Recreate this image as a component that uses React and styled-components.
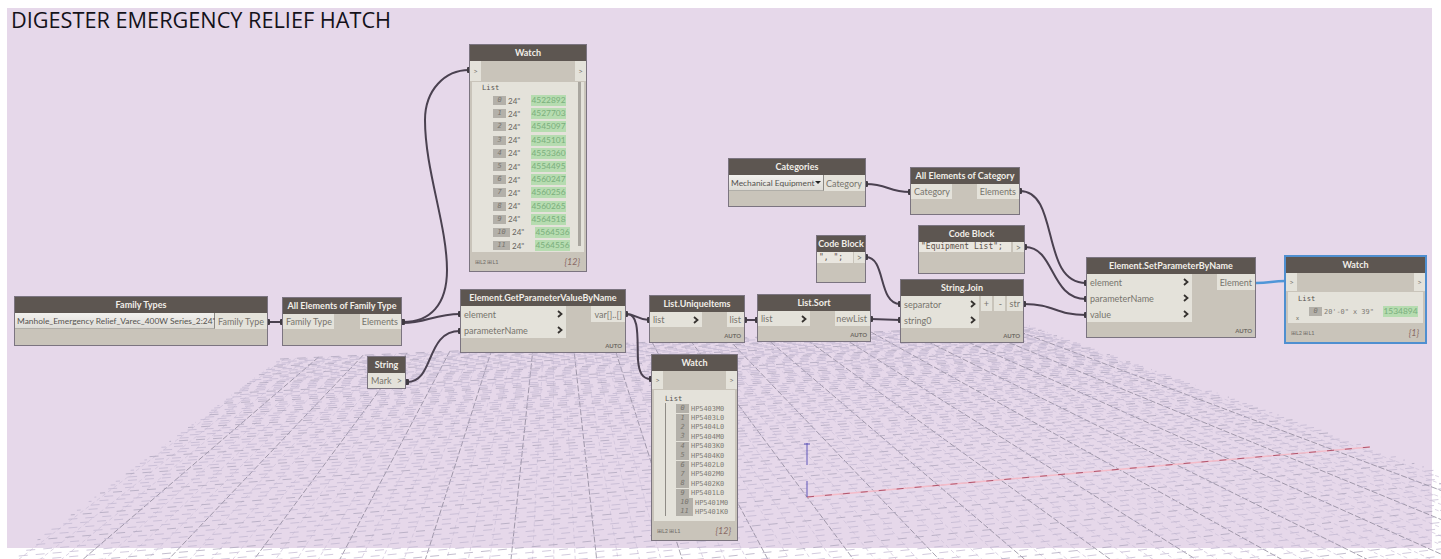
import React from 'react';
import styled, {createGlobalStyle} from 'styled-components';

// ********** Perspective grid ********** //

const cross = (p1, p2, q1, q2) => {
  const a = p2[0] - p1[0], b = p2[1] - p1[1], c = q2[0] - q1[0], d = q2[1] - q1[1];
  const t = ((q1[0] - p1[0]) * d - (q1[1] - p1[1]) * c) / (a * d - b * c);
  return [p1[0] + a * t, p1[1] + b * t];
};

const LEFT_VP = [553, 156];
const RIGHT_VP = [4593, 163];
const CORNER_A = [280, 359];
const CORNER_B = [1027, 325];

const toPath = (p, q) => `M${p[0].toFixed(1)} ${p[1].toFixed(1)}L${q[0].toFixed(1)} ${q[1].toFixed(1)}`;

// the dashes must not line up from one row to the next
const scatter = k => {
  const s = Math.sin(k * 12.9898 + 4.1) * 43758.5453;
  return (s - Math.floor(s)) * 17;
};

const steepLines = [];
for (let k = -40; k <= 40; k++) {
  const x = 845 + k * 20.8;
  if (x < 26 || x > 1652) continue;
  const start = cross(LEFT_VP, [x, 548], CORNER_A, CORNER_B);
  const end = cross(LEFT_VP, [x, 548], [0, 640], [1, 640]);
  steepLines.push({d: toPath(start, end), major: k % 4 === 0, k});
}

const flatLines = [];
for (let k = -30; k <= 70; k++) {
  const y = 160 + 1 / (0.00245 + k * 0.0000368);
  const onLeft = [CORNER_A[0] - (y - CORNER_A[1]) / 0.745, y];
  const end = cross(RIGHT_VP, onLeft, CORNER_B, [1433, 470]);
  flatLines.push({d: toPath(onLeft, end), major: k % 5 === 0, k});
}

const GridPlane = () => (
  <Overlay viewBox="0 0 1441 559">
    {steepLines.map(l => (
      <path key={l.k} d={l.d} fill="none"
        stroke={l.major ? '#7f7a8c' : '#cdc2d9'}
        strokeWidth={0.7}
        strokeDasharray={l.major ? '6 2' : '4 3'} />
    ))}
    {flatLines.map(l => (
      <path key={l.k} d={l.d} fill="none"
        stroke={l.major ? '#a8a1b7' : '#bfb5ce'}
        strokeWidth={0.7}
        strokeDasharray="9 8"
        strokeDashoffset={scatter(l.k)} />
    ))}
    <path d="M807 497L1370 447" fill="none" stroke="#f5bcc9" strokeWidth="1.4" />
    <path d="M807 497L1370 447" fill="none" stroke="#b0566f" strokeWidth="1" strokeDasharray="7 11" />
    <path d="M807 443V465M804 444H810M807 481V497" fill="none" stroke="#5f55b8" strokeWidth="1" />
  </Overlay>
);

// ********** Wires ********** //

const WIRES = [
  'M268 322H282',
  'M403 322C430 322 447 305 447 270C447 225 425 170 425 120C425 90 445 70 469 70',
  'M403 323C425 323 435 314 460 314',
  'M407 382C435 382 425 331 460 331',
  'M626 314C636 314 638 320 649 320',
  'M627 314C640 314 637 340 638 360C639 372 642 379 651 379',
  'M745 320H757',
  'M871 319L900 320',
  'M866 184C888 184 888 192 910 192',
  'M866 257C886 257 878 304 900 304',
  'M1020 191C1060 191 1040 283 1086 283',
  'M1025 247C1055 247 1050 299 1086 299',
  'M1024 304C1055 304 1055 315 1086 315',
];

const NUBS = [
  [268, 322], [282, 322], [403, 322], [469, 70], [460, 314], [407, 382], [460, 331],
  [626, 314], [649, 320], [651, 379], [745, 320], [757, 320], [871, 319], [900, 320],
  [866, 184], [910, 192], [866, 257], [900, 304], [1020, 191], [1086, 283],
  [1025, 247], [1086, 299], [1024, 304], [1086, 315],
];

const WireLayer = () => (
  <Overlay viewBox="0 0 1441 559">
    {WIRES.map(d => <path key={d} d={d} fill="none" stroke="#4a4150" strokeWidth="2" />)}
    {NUBS.map(([x, y]) => <rect key={`${x}-${y}`} x={x - 2} y={y - 3} width="4" height="6" rx="1" fill="#3f3a42" />)}
    <path d="M1256 283C1270 283 1272 281 1285 281" fill="none" stroke="#4f96d8" strokeWidth="2.5" />
  </Overlay>
);

// ********** Page ********** //

const GlobalStyle = createGlobalStyle`
  html, body {
    margin: 0;
    background: #ffffff;
  }
`;

const Page = styled.div`
  position: relative;
  width: 1441px;
  height: 559px;
  overflow: hidden;
  background: #ffffff;
  font-family: Lato, "Open Sans", "Liberation Sans", sans-serif;
`;

const Canvas = styled.div`
  margin: 0 9px 0 7px;
  position: relative;
  top: 8px;
  height: 540px;
  padding: 0 4px;
  background: #e6d8ea;
`;

const Title = styled.h1`
  margin: 0;
  font-family: "Open Sans", "Liberation Sans", sans-serif;
  font-size: 21.7px;
  line-height: 24px;
  font-weight: 400;
  color: #14121a;
`;

const Overlay = styled.svg`
  position: absolute;
  left: 0;
  top: 0;
  width: 1441px;
  height: 559px;
`;

// ********** Node parts ********** //

const Node = styled.div`
  position: absolute;
  left: ${p => p.$x}px;
  top: ${p => p.$y}px;
  width: ${p => p.$w}px;
  height: ${p => p.$h}px;
  box-sizing: border-box;
  display: flex;
  flex-direction: column;
  background: #c9c4ba;
  border: ${p => (p.$selected ? '2px solid #4f8fd0' : '1px solid #7b7480')};
`;

const Header = styled.div`
  flex: none;
  height: 16px;
  background: #5d5651;
  color: #f1eee8;
  font-size: 9px;
  font-weight: 700;
  line-height: 16px;
  text-align: center;
  white-space: nowrap;
`;

const Body = styled.div`
  flex: 1;
  display: flex;
  justify-content: space-between;
  align-items: flex-start;
  min-height: 0;
`;

const Column = styled.div`
  width: ${p => p.$w}px;
  display: flex;
  flex-direction: column;
`;

const Port = styled.div`
  width: ${p => (p.$w ? `${p.$w}px` : 'auto')};
  height: ${p => p.$h || 16}px;
  box-sizing: border-box;
  padding: 0 3px;
  display: flex;
  align-items: center;
  justify-content: ${p => (p.$out ? 'flex-end' : 'space-between')};
  gap: 3px;
  background: #e4e2da;
  color: #77746d;
  font-size: 9px;
  white-space: nowrap;
`;

const Sep = styled.div`
  display: flex;
  gap: 2px;
`;

const Dropdown = styled.div`
  width: ${p => p.$w}px;
  height: 16px;
  box-sizing: border-box;
  padding: 0 3px 0 2px;
  display: flex;
  align-items: center;
  justify-content: space-between;
  background: linear-gradient(#f2f1ee, #dddbd6);
  border-right: 1px solid #8c8984;
  border-bottom: 1px solid #b0aea8;
  color: #55524f;
  font-size: 8.4px;
  white-space: nowrap;
`;

const Caret = styled.span`
  flex: none;
  width: 0;
  height: 0;
  border-left: 3px solid transparent;
  border-right: 3px solid transparent;
  border-top: 3px solid #222222;
`;

const CodeText = styled.div`
  width: ${p => p.$w}px;
  height: ${p => p.$h}px;
  box-sizing: border-box;
  padding-left: 2px;
  background: #e9e6df;
  color: #5b5048;
  font-family: "DejaVu Sans Mono", "Liberation Mono", monospace;
  font-size: 8px;
  line-height: ${p => p.$h}px;
  white-space: pre;
`;

const Auto = styled.div`
  flex: none;
  height: 10px;
  padding-right: 3px;
  color: #6f6b66;
  font-size: 6px;
  font-weight: 700;
  line-height: 8px;
  text-align: right;
`;

const ChevronMark = styled.svg`
  flex: none;
  width: 6px;
  height: 8px;
`;

const Chevron = () => (
  <ChevronMark viewBox="0 0 6 8">
    <path d="M1 1L4.5 4L1 7" fill="none" stroke="#35322f" strokeWidth="1.8" />
  </ChevronMark>
);

const InputPort = ({label, h}) => (
  <Port $h={h}>
    <span>{label}</span>
    <Chevron />
  </Port>
);

// ********** Watch parts ********** //

const PortBar = styled.div`
  flex: none;
  height: ${p => p.$h}px;
  display: flex;
  justify-content: space-between;
`;

const PortCell = styled.div`
  width: 11px;
  background: #e4e2da;
  color: #77746d;
  font-size: 8px;
  line-height: ${p => p.$h}px;
  text-align: center;
`;

const Panel = styled.div`
  flex: 1;
  position: relative;
  margin: 1px 2px 0;
  padding: ${p => p.$pad};
  min-height: 0;
  overflow: hidden;
  background: #e4e2da;
`;

const ListLabel = styled.div`
  height: ${p => p.$h}px;
  color: #55524f;
  font-family: "DejaVu Sans Mono", "Liberation Mono", monospace;
  font-size: 7.2px;
  line-height: ${p => p.$h}px;
`;

const Item = styled.div`
  height: ${p => p.$h}px;
  padding-left: ${p => p.$indent}px;
  display: flex;
  align-items: center;
`;

const Badge = styled.span`
  flex: none;
  width: ${p => p.$w}px;
  height: 9px;
  margin-right: 2px;
  background: #b3b0a9;
  color: #77746d;
  font-family: "DejaVu Sans Mono", "Liberation Mono", monospace;
  font-size: 7px;
  font-style: italic;
  line-height: 9px;
  text-align: center;
`;

const Value = styled.span`
  flex: none;
  width: ${p => p.$w}px;
  color: #66635d;
  font-size: 8px;
  white-space: nowrap;
`;

const MonoValue = styled.span`
  flex: none;
  width: ${p => (p.$w ? `${p.$w}px` : 'auto')};
  color: #7d7a73;
  font-family: "DejaVu Sans Mono", "Liberation Mono", monospace;
  font-size: 6.9px;
  white-space: pre;
`;

const Green = styled.span`
  flex: none;
  width: 35px;
  height: 11px;
  background: #b6dcb0;
  color: #7aae7c;
  font-size: 8.4px;
  line-height: 11px;
  text-align: center;
`;

const Scrollbar = styled.div`
  position: absolute;
  right: 3px;
  top: 0;
  bottom: 6px;
  width: 3px;
  background: #a9a69f;
`;

const TreeLine = styled.div`
  position: absolute;
  left: 11px;
  top: 13px;
  bottom: 5px;
  width: 1px;
  background: #8f8c86;
`;

const LevelMark = styled.span`
  position: absolute;
  left: 8px;
  bottom: 2px;
  color: #77746d;
  font-size: 6px;
`;

const Foot = styled.div`
  flex: none;
  height: ${p => p.$h}px;
  padding: 0 6px 0 5px;
  display: flex;
  align-items: center;
  justify-content: space-between;
  color: #6f6b66;
  font-size: 5.5px;
`;

const Count = styled.span`
  color: #8a6a66;
  font-size: 9px;
  font-style: italic;
`;

const Watch = ({x, y, w, h, selected, bar, pad, count, children}) => (
  <Node $x={x} $y={y} $w={w} $h={h} $selected={selected}>
    <Header>Watch</Header>
    <PortBar $h={bar}>
      <PortCell $h={bar}>&gt;</PortCell>
      <PortCell $h={bar}>&gt;</PortCell>
    </PortBar>
    <Panel $pad={pad}>{children}</Panel>
    <Foot $h={19}>
      <span>⊞L2 ⊞L1</span>
      <Count>{`{${count}}`}</Count>
    </Foot>
  </Node>
);

// ********** Data ********** //

const ELEMENT_IDS = [
  '4522892', '4527703', '4545097', '4545101', '4553360', '4554495',
  '4560247', '4560256', '4560265', '4564518', '4564536', '4564556',
];

const MARKS = [
  'HP5403M0', 'HP5403L0', 'HP5404L0', 'HP5404M0', 'HP5403K0', 'HP5404K0',
  'HP5402L0', 'HP5402M0', 'HP5402K0', 'HP5401L0', 'HP5401M0', 'HP5401K0',
];

// ********** App Component ********** //

const App = () => (
  <Page>
    <GlobalStyle />
    <Canvas>
      <Title>DIGESTER EMERGENCY RELIEF HATCH</Title>
    </Canvas>
    <GridPlane />
    <WireLayer />

    <Node $x={14} $y={296} $w={254} $h={50}>
      <Header>Family Types</Header>
      <Body>
        <Dropdown $w={200}>
          <span>Manhole_Emergency Relief_Varec_400W Series_2:24"</span>
          <Caret />
        </Dropdown>
        <Port $w={52} $out>Family Type</Port>
      </Body>
    </Node>

    <Node $x={282} $y={297} $w={120} $h={49}>
      <Header>All Elements of Family Type</Header>
      <Body>
        <Port $w={51} $h={15}>Family Type</Port>
        <Port $w={41} $h={15} $out>Elements</Port>
      </Body>
    </Node>

    <Node $x={367} $y={356} $w={39} $h={33}>
      <Header>String</Header>
      <Port $h={15}>
        <span>Mark</span>
        <span>&gt;</span>
      </Port>
    </Node>

    <Watch x={469} y={44} w={118} h={228} bar={20} pad="0 0 0 10px" count={12}>
      <ListLabel $h={12}>List</ListLabel>
      <Scrollbar />
      {ELEMENT_IDS.map((id, i) => (
        <Item key={id} $h={13.2} $indent={11}>
          <Badge $w={i > 9 ? 17 : 13}>{i}</Badge>
          <Value $w={23}>24"</Value>
          <Green>{id}</Green>
        </Item>
      ))}
    </Watch>

    <Node $x={460} $y={289} $w={166} $h={64}>
      <Header>Element.GetParameterValueByName</Header>
      <Body>
        <Column $w={105}>
          <InputPort label="element" />
          <InputPort label="parameterName" />
        </Column>
        <Port $w={34} $out>var[]..[]</Port>
      </Body>
      <Auto>AUTO</Auto>
    </Node>

    <Node $x={649} $y={295} $w={96} $h={48}>
      <Header>List.UniqueItems</Header>
      <Body>
        <Column $w={52}>
          <InputPort label="list" h={15} />
        </Column>
        <Port $w={17} $h={15} $out>list</Port>
      </Body>
      <Auto>AUTO</Auto>
    </Node>

    <Watch x={651} y={354} w={87} h={187} bar={18} pad="3px 0 0 11px" count={12}>
      <ListLabel $h={11}>List</ListLabel>
      <TreeLine />
      {MARKS.map((mark, i) => (
        <Item key={mark} $h={9.4} $indent={11}>
          <Badge $w={i > 9 ? 17 : 13}>{i}</Badge>
          <MonoValue>{mark}</MonoValue>
        </Item>
      ))}
    </Watch>

    <Node $x={757} $y={294} $w={114} $h={48}>
      <Header>List.Sort</Header>
      <Body>
        <Column $w={52}>
          <InputPort label="list" h={15} />
        </Column>
        <Port $w={35} $h={15} $out>newList</Port>
      </Body>
      <Auto>AUTO</Auto>
    </Node>

    <Node $x={728} $y={158} $w={138} $h={49}>
      <Header>Categories</Header>
      <Body>
        <Dropdown $w={95}>
          <span>Mechanical Equipment</span>
          <Caret />
        </Dropdown>
        <Port $w={41} $out>Category</Port>
      </Body>
    </Node>

    <Node $x={910} $y={167} $w={110} $h={48}>
      <Header>All Elements of Category</Header>
      <Body>
        <Port $w={41} $h={15}>Category</Port>
        <Port $w={42} $h={15} $out>Elements</Port>
      </Body>
    </Node>

    <Node $x={816} $y={235} $w={50} $h={48}>
      <Header>Code Block</Header>
      <Body>
        <CodeText $w={36} $h={11}>", ";</CodeText>
        <Port $w={11} $h={11} $out>&gt;</Port>
      </Body>
    </Node>

    <Node $x={918} $y={225} $w={107} $h={49}>
      <Header>Code Block</Header>
      <Body>
        <CodeText $w={92} $h={10}>"Equipment List";</CodeText>
        <Port $w={11} $h={10} $out>&gt;</Port>
      </Body>
    </Node>

    <Node $x={900} $y={279} $w={124} $h={64}>
      <Header>String.Join</Header>
      <Body>
        <Column $w={78}>
          <InputPort label="separator" />
          <InputPort label="string0" />
        </Column>
        <Sep>
          <Port $w={11} $h={15} $out>+</Port>
          <Port $w={11} $h={15} $out>-</Port>
          <Port $w={16} $h={15} $out>str</Port>
        </Sep>
      </Body>
      <Auto>AUTO</Auto>
    </Node>

    <Node $x={1086} $y={257} $w={170} $h={81}>
      <Header>Element.SetParameterByName</Header>
      <Body>
        <Column $w={105}>
          <InputPort label="element" />
          <InputPort label="parameterName" />
          <InputPort label="value" />
        </Column>
        <Port $w={38} $out>Element</Port>
      </Body>
      <Auto>AUTO</Auto>
    </Node>

    <Watch x={1284} y={255} w={143} h={89} selected bar={18} pad="1px 0 0 10px" count={1}>
      <ListLabel $h={12}>List</ListLabel>
      <LevelMark>x</LevelMark>
      <Item $h={13} $indent={11}>
        <Badge $w={13}>0</Badge>
        <MonoValue $w={59}>20'-0" x 39"</MonoValue>
        <Green>1534894</Green>
      </Item>
    </Watch>
  </Page>
);

export default App;
